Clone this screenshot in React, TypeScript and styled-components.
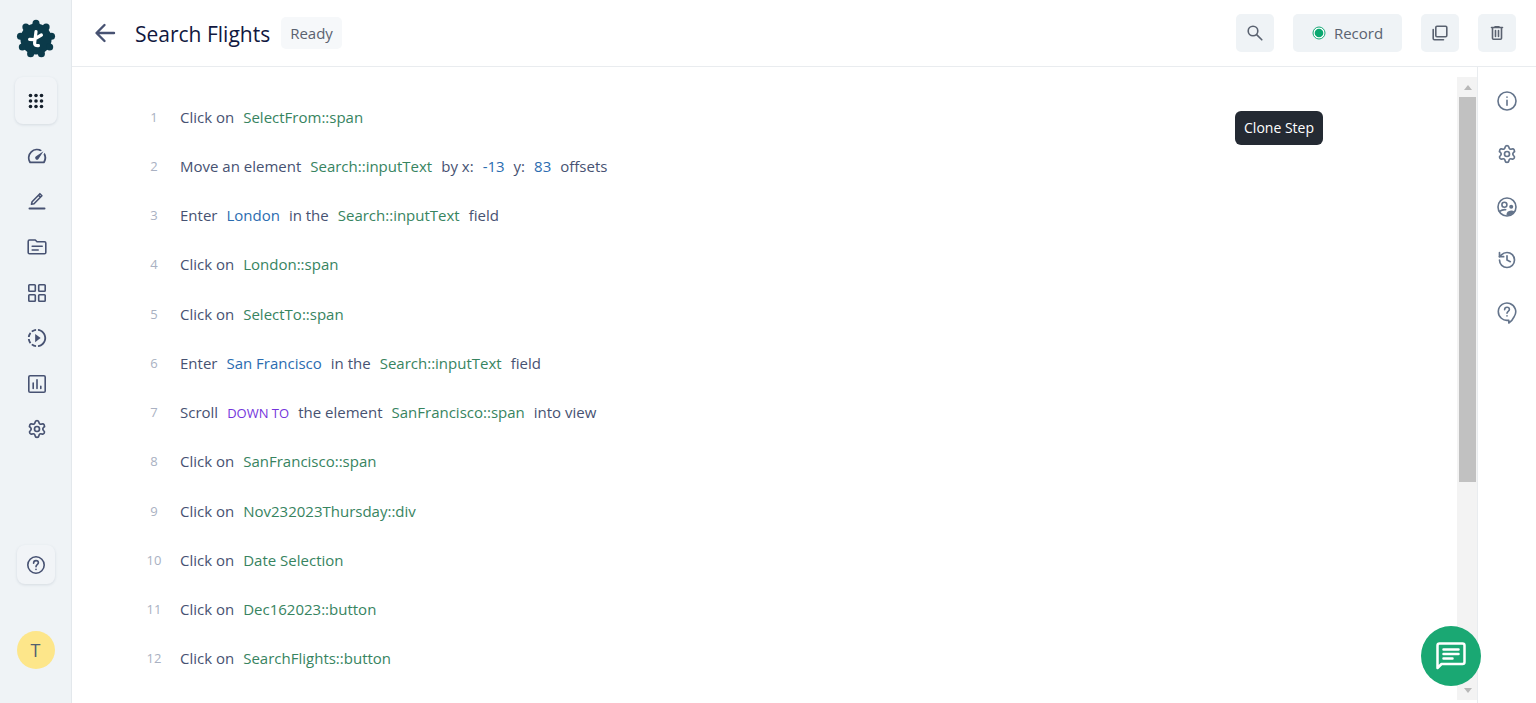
import React from "react";
import styled, { createGlobalStyle } from "styled-components";
import { MdOutlineSpeed, MdOutlineSlowMotionVideo } from "react-icons/md";
import { Settings, History } from "lucide-react";

const GlobalStyle = createGlobalStyle`
  *, *::before, *::after { box-sizing: border-box; }
  body {
    margin: 0;
    background: #fff;
    color: #475272;
    font-family: "Open Sans", "Noto Sans", sans-serif;
    font-size: 15px;
    line-height: 24px;
  }
  button { font: inherit; color: inherit; border: 0; padding: 0; background: none; cursor: pointer; }
  a { color: inherit; text-decoration: none; }
  ol, ul { list-style: none; margin: 0; padding: 0; }
`;

const Shell = styled.div`
  display: flex;
  min-height: 100vh;
`;

const Sidebar = styled.aside`
  flex: none;
  width: 72px;
  display: flex;
  flex-direction: column;
  align-items: center;
  padding: 19px 0 34px;
  background: #eff3f6;
  border-right: 1px solid #e3e8ec;
`;

const Logo = styled.a`
  display: flex;
  width: 40px;
  height: 40px;
`;

const Tile = styled.button<{ $width: number; $height: number }>`
  display: flex;
  align-items: center;
  justify-content: center;
  width: ${(p) => p.$width}px;
  height: ${(p) => p.$height}px;
  border-radius: 8px;
  background: #f1f4f7;
  box-shadow: 0 1px 3px rgba(40, 60, 90, 0.13);
`;

const AppsTile = styled(Tile)`
  margin-top: 18px;
  color: #16202c;
`;

const IconNav = styled.nav<{ $height: number }>`
  width: 100%;
  ul {
    display: flex;
    flex-direction: column;
    height: ${(p) => p.$height}px;
  }
  li {
    flex: 1;
    display: flex;
    align-items: center;
    justify-content: center;
  }
  a { display: flex; }
`;

const MainNav = styled(IconNav)`
  margin: 9px 0 auto;
  padding-left: 2px;
`;

const Avatar = styled.button`
  width: 38px;
  height: 38px;
  margin-top: 47px;
  border-radius: 50%;
  background: #fde68a;
  color: #526070;
  font-size: 18px;
`;

const Page = styled.div`
  flex: 1;
  min-width: 0;
  display: flex;
  flex-direction: column;
`;

const Header = styled.header`
  display: flex;
  align-items: center;
  height: 67px;
  padding: 0 20px 0 22px;
  border-bottom: 1px solid #e9ecef;
`;

const Title = styled.h1`
  margin: 0 11px 0 19px;
  padding-top: 2px;
  color: #111840;
  font-size: 21px;
  font-weight: 500;
  line-height: 28px;
`;

const Status = styled.span`
  padding: 4px 9px;
  border-radius: 5px;
  background: #f6f8fa;
  color: #5b6270;
`;

const Actions = styled.div`
  display: flex;
  gap: 19px;
  margin-left: auto;
`;

const ActionButton = styled.button<{ $wide?: boolean }>`
  display: flex;
  align-items: center;
  justify-content: center;
  gap: 8px;
  width: ${(p) => (p.$wide ? 109 : 38)}px;
  height: 38px;
  border-radius: 5px;
  background: #eff3f6;
  color: #5a6270;
`;

const BackLink = styled.a`
  display: flex;
`;

const Body = styled.div`
  flex: 1;
  display: flex;
`;

const Steps = styled.main`
  position: relative;
  flex: 1;
  display: flex;
  min-width: 0;
  padding: 25px 0 20px 68px;
`;

const StepList = styled.ol`
  flex: 1;
  display: flex;
  flex-direction: column;
`;

const StepRow = styled.li`
  flex: 1;
  display: flex;
  align-items: center;
  min-height: 40px;
`;

const StepNumber = styled.span`
  width: 28px;
  margin-right: 12px;
  color: #a9b1c2;
  font-size: 13px;
  text-align: center;
`;

const Sentence = styled.p`
  display: flex;
  align-items: baseline;
  gap: 9px;
  margin: 0;
`;

type Kind = "text" | "element" | "data" | "keyword";
const tokenColor: Record<Kind, string> = {
  text: "#475272",
  element: "#37845f",
  data: "#2b6cb0",
  keyword: "#7435dc",
};

const Token = styled.span<{ $kind: Kind }>`
  color: ${(p) => tokenColor[p.$kind]};
  font-size: ${(p) => (p.$kind === "keyword" ? 13 : 15)}px;
`;

const Tooltip = styled.div`
  position: absolute;
  top: 44px;
  right: 134px;
  padding: 5px 9px;
  border-radius: 6px;
  background: #242a33;
  color: #fff;
  font-size: 14px;
`;

const ScrollTrack = styled.div`
  flex: none;
  width: 20px;
  margin: 10px 0 3px;
  padding: 0 1px 0 2px;
  display: flex;
  flex-direction: column;
  background: #f3f3f3;
`;

const ScrollArrow = styled.button`
  display: flex;
  align-items: center;
  justify-content: center;
  height: 20px;
`;

const ScrollRange = styled.div`
  flex: 1;
`;

const ScrollThumb = styled.div`
  height: 66%;
  background: #c1c1c1;
`;

const Rail = styled.aside`
  flex: none;
  width: 59px;
  padding-top: 8px;
  border-left: 1px solid #e9ecef;
  color: #64748b;
`;

const ChatButton = styled.button`
  position: fixed;
  right: 55px;
  bottom: 17px;
  display: flex;
  align-items: center;
  justify-content: center;
  width: 60px;
  height: 60px;
  border-radius: 50%;
  background: #1aa873;
`;

const Line = styled.svg`
  fill: none;
  stroke: currentColor;
  stroke-width: 1.6;
  stroke-linecap: round;
  stroke-linejoin: round;
`;

const lobes = Array.from({ length: 9 }, (_, i) => {
  const a = (i * 40 - 90) * (Math.PI / 180);
  return [20 + 15.8 * Math.cos(a), 20 + 15.8 * Math.sin(a)];
});

const BrandMark = () => (
  <svg width="40" height="40" viewBox="0 0 40 40" aria-hidden="true">
    <circle cx="20" cy="20" r="15.6" fill="#0b3a4a" />
    {lobes.map(([x, y], i) => (
      <circle key={i} cx={x} cy={y} r="3.5" fill="#0b3a4a" />
    ))}
    <path
      d="M20 12.6 L18.6 24 Q18.4 27 22.4 26.6 M13.6 20.4 L17.6 20.6 L25.4 16"
      fill="none" stroke="#fff" strokeWidth="3.2" strokeLinecap="round" strokeLinejoin="round"
    />
  </svg>
);

const BackArrow = () => (
  <Line width="22" height="22" viewBox="0 0 22 22" aria-hidden="true">
    <path strokeWidth="2.4" d="M20 11H3M10.5 3 2.5 11l8 8" />
  </Line>
);

const RecordDot = () => (
  <svg width="14" height="14" viewBox="0 0 14 14" aria-hidden="true">
    <circle cx="7" cy="7" r="6" fill="#fff" stroke="#12a874" strokeWidth="1" />
    <circle cx="7" cy="7" r="4.3" fill="#0aa870" />
  </svg>
);

const SearchIcon = () => (
  <Line width="16" height="16" viewBox="0 0 16 16" aria-hidden="true">
    <circle cx="6" cy="6" r="4.8" />
    <path d="M9.6 9.6l5.2 5.2" />
  </Line>
);

const Copy = () => (
  <Line width="16" height="16" viewBox="0 0 16 16" aria-hidden="true">
    <rect x="3.8" y="1.2" width="11" height="10.6" rx="1.2" />
    <path d="M1.2 4.5v9.1q0 1.2 1.2 1.2h9.1" />
  </Line>
);

const Trash = () => (
  <Line width="14" height="16" viewBox="0 0 14 16" aria-hidden="true">
    <path d="M1.5 2.5h11M5 1.7h4M2.5 2.5v10.7q0 1 1 1h7q1 0 1-1V2.5M5.5 5.5v6M8.5 5.5v6" />
  </Line>
);

const Chat = () => (
  <svg width="30" height="28" viewBox="0 0 30 28" fill="none" stroke="#fff" strokeWidth="2.5" strokeLinecap="round" strokeLinejoin="round" aria-hidden="true">
    <path d="M1.5 26V3.5q0-2 2-2h23q2 0 2 2v16.5q0 2-2 2H5.5z" />
    <path d="M7.5 7.5h15M7.5 12h15M7.5 16.5h9" />
  </svg>
);

const AppDots = () => (
  <svg width="16" height="16" viewBox="0 0 16 16" fill="currentColor" aria-hidden="true">
    {[2.5, 8, 13.5].flatMap((y) => [2.5, 8, 13.5].map((x) => <circle key={`${x}-${y}`} cx={x} cy={y} r="1.8" />))}
  </svg>
);

const Gauge = () => <MdOutlineSpeed size={22} />;
const Playback = () => <MdOutlineSlowMotionVideo size={22} />;
const Gear = () => <Settings size={20} strokeWidth={2} />;
const Clock = () => <History size={20} strokeWidth={2} />;

const Reviewers = () => (
  <Line width="20" height="20" viewBox="0 0 20 20" aria-hidden="true">
    <circle cx="10" cy="10" r="9" />
    <circle cx="7.4" cy="7.8" r="2.5" />
    <circle cx="14.2" cy="9.8" r="2" fill="currentColor" stroke="none" />
    <path d="M2.5 14.4q3-2 6.200-1.700" />
    <path d="M9.400 18.500q0-4.700 4.800-4.900 2 0 3.300.8-2.300 4.100-8.100 4.100z" fill="currentColor" stroke="none" />
  </Line>
);

const Pencil = () => (
  <Line width="20" height="20" viewBox="0 0 20 20" aria-hidden="true">
    <path d="M4.5 13.3 5.1 10.7 12.9 2.7l2 2L7 12.7zM11.5 4.2l2 2" />
    <path d="M2.5 17.4h15" strokeWidth="2" />
  </Line>
);

const Folder = () => (
  <Line width="20" height="18" viewBox="0 0 20 18" aria-hidden="true">
    <path d="M1.2 3.5v11q0 1.3 1.3 1.3h15q1.3 0 1.3-1.3V5q0-1.3-1.3-1.3H10L8.3 2H2.5Q1.2 2 1.2 3.5zM5.2 8.2h10M5.2 12h6" />
  </Line>
);

const Squares = () => (
  <Line width="20" height="20" viewBox="0 0 20 20" aria-hidden="true">
    {[1.8, 11.7].flatMap((y) => [1.8, 11.7].map((x) => (
      <rect key={`${x}-${y}`} x={x} y={y} width="6.5" height="6.5" rx="0.8" />
    )))}
  </Line>
);

const Bars = () => (
  <Line width="20" height="20" viewBox="0 0 20 20" aria-hidden="true">
    <rect x="1.8" y="1.8" width="16.4" height="16.4" rx="1.3" />
    <path d="M6.2 9v5.5M10 5.8v8.7M13.8 12.3v2.2" />
  </Line>
);

const Question = () => (
  <Line width="20" height="20" viewBox="0 0 20 20" aria-hidden="true">
    <circle cx="10" cy="10" r="8.2" />
    <path d="M7.6 8.2q0-2.6 2.4-2.6t2.4 2.2q0 1-1.2 1.9t-1.2 2M10 14.2v.2" />
  </Line>
);

const InfoIcon = () => (
  <Line width="20" height="20" viewBox="0 0 20 20" aria-hidden="true">
    <circle cx="10" cy="10" r="9" />
    <path d="M10 9.2v5M10 6v.2" />
  </Line>
);

const Support = () => (
  <Line width="20" height="22" viewBox="0 0 20 22" aria-hidden="true">
    <path d="M11.8 18.2A8.7 8.7 0 1 1 17.2 14.600Q15.400 18.600 11.800 21z" />
    <path d="M7.6 7.8q0-2.6 2.4-2.6t2.4 2.2q0 1-1.2 1.9t-1.2 2M10 13.8v.2" />
  </Line>
);

const mainLinks = [
  { label: "Dashboard", Icon: Gauge },
  { label: "Create tests", Icon: Pencil },
  { label: "Test data", Icon: Folder },
  { label: "Test plans", Icon: Squares },
  { label: "Run results", Icon: Playback },
  { label: "Reports", Icon: Bars },
  { label: "Settings", Icon: Gear },
];

const railLinks = [
  { label: "Details", Icon: InfoIcon },
  { label: "Test settings", Icon: Gear },
  { label: "Reviewers", Icon: Reviewers },
  { label: "History", Icon: Clock },
  { label: "Support", Icon: Support },
];

type Part = [Kind, string];
const click = (name: string): Part[] => [["text", "Click on"], ["element", name]];
const enter = (value: string): Part[] => [
  ["text", "Enter"], ["data", value], ["text", "in the"], ["element", "Search::inputText"], ["text", "field"],
];

const steps: Part[][] = [
  click("SelectFrom::span"),
  [
    ["text", "Move an element"], ["element", "Search::inputText"], ["text", "by x:"],
    ["data", "-13"], ["text", "y:"], ["data", "83"], ["text", "offsets"],
  ],
  enter("London"),
  click("London::span"),
  click("SelectTo::span"),
  enter("San Francisco"),
  [["text", "Scroll"], ["keyword", "DOWN TO"], ["text", "the element"], ["element", "SanFrancisco::span"], ["text", "into view"]],
  click("SanFrancisco::span"),
  click("Nov232023Thursday::div"),
  click("Date Selection"),
  click("Dec162023::button"),
  click("SearchFlights::button"),
];

export default function App() {
  return (
    <>
      <GlobalStyle />
      <Shell>
        <Sidebar>
          <Logo href="#" aria-label="Home"><BrandMark /></Logo>
          <AppsTile $width={42} $height={47} aria-label="Apps"><AppDots /></AppsTile>
          <MainNav $height={319} aria-label="Main">
            <ul>
              {mainLinks.map(({ label, Icon }) => (
                <li key={label}><a href="#" aria-label={label}><Icon /></a></li>
              ))}
            </ul>
          </MainNav>
          <Tile $width={38} $height={39} aria-label="Help"><Question /></Tile>
          <Avatar aria-label="Account">T</Avatar>
        </Sidebar>
        <Page>
          <Header>
            <BackLink href="#" aria-label="Back"><BackArrow /></BackLink>
            <Title>Search Flights</Title>
            <Status>Ready</Status>
            <Actions>
              <ActionButton aria-label="Search"><SearchIcon /></ActionButton>
              <ActionButton $wide><RecordDot />Record</ActionButton>
              <ActionButton aria-label="Clone"><Copy /></ActionButton>
              <ActionButton aria-label="Delete"><Trash /></ActionButton>
            </Actions>
          </Header>
          <Body>
            <Steps>
              <StepList>
                {steps.map((parts, i) => (
                  <StepRow key={i}>
                    <StepNumber>{i + 1}</StepNumber>
                    <Sentence>
                      {parts.map(([kind, text], j) => (
                        <Token key={j} $kind={kind}>{text}</Token>
                      ))}
                    </Sentence>
                  </StepRow>
                ))}
              </StepList>
              <Tooltip role="tooltip">Clone Step</Tooltip>
            </Steps>
            <ScrollTrack>
              <ScrollArrow aria-label="Scroll up">
                <svg width="8" height="5" viewBox="0 0 8 5"><path d="M0 5 4 0l4 5z" fill="#b8b8b8" /></svg>
              </ScrollArrow>
              <ScrollRange><ScrollThumb /></ScrollRange>
              <ScrollArrow aria-label="Scroll down">
                <svg width="8" height="5" viewBox="0 0 8 5"><path d="M0 0h8L4 5z" fill="#b8b8b8" /></svg>
              </ScrollArrow>
            </ScrollTrack>
            <Rail>
              <IconNav $height={264} aria-label="Test details">
                <ul>
                  {railLinks.map(({ label, Icon }) => (
                    <li key={label}><a href="#" aria-label={label}><Icon /></a></li>
                  ))}
                </ul>
              </IconNav>
            </Rail>
          </Body>
        </Page>
      </Shell>
      <ChatButton aria-label="Open chat"><Chat /></ChatButton>
    </>
  );
}
